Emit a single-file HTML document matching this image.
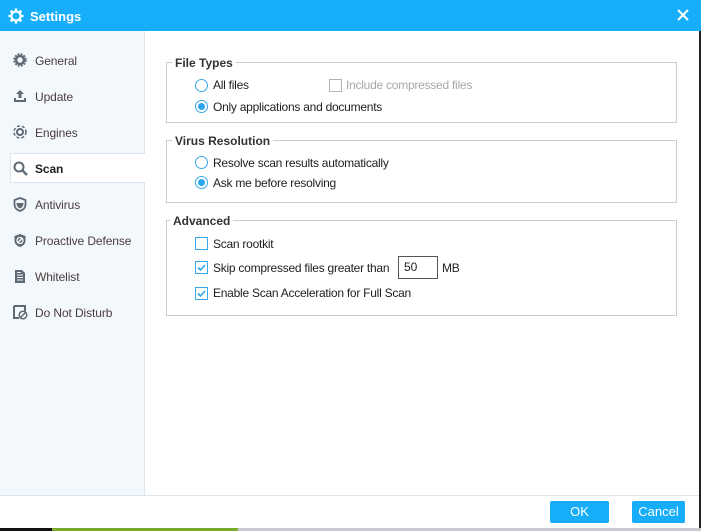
<!DOCTYPE html>
<html><head><style>
*{margin:0;padding:0;box-sizing:border-box}
body{width:701px;height:531px;position:relative;overflow:hidden;background:#fff;font-family:"Liberation Sans",sans-serif;font-size:12px;color:#1e1e1e}
.abs{position:absolute}
#title{left:0;top:0;width:701px;height:31px;background:#16aefa;color:#fff;font-weight:bold;font-size:13px}
#side{left:0;top:31px;width:145px;height:464px;background:#f3f8fc;border-right:1px solid #dde6ee}
.it{position:absolute;left:0;width:145px;height:30px;color:#4a3c3c;font-size:12px;letter-spacing:-0.1px}
.it span{position:absolute;left:35px;top:8px}
.it svg{position:absolute;left:13px;top:7px}
.sel{background:#fff;border:1px solid #dde6ee;border-right:none;left:10px;width:135px}
.sel span{left:24px;font-weight:bold;color:#222}
.sel svg{left:2px}
.grp{position:absolute;left:166px;width:511px;border:1px solid #cfcdbf}
.gt{position:absolute;left:172px;background:#fff;padding:0 3px;font-weight:bold;color:#333}
.rad{position:absolute;width:13px;height:13px;border:1px solid #3aa8e8;border-radius:50%;background:#fff}
.rad.on::after{content:"";position:absolute;left:2px;top:2px;width:7px;height:7px;border-radius:50%;background:#2aa6ee}
.cb{position:absolute;width:13px;height:13px;border:1px solid #3aa8e8;background:#fff}
.lbl{position:absolute;letter-spacing:-0.25px}
.btn{position:absolute;top:501px;height:22px;background:#16aefa;color:#fff;text-align:center;line-height:22px;border-radius:2px;font-size:13px}
</style></head><body>
<div id="title" class="abs">
<svg class="abs" style="left:8px;top:8px" width="16" height="16" viewBox="0 0 16 16"><g fill="none" stroke="#fff" stroke-width="2"><circle cx="8" cy="8" r="4.5"/></g><g stroke="#fff" stroke-width="2.6"><line x1="8" y1="0.5" x2="8" y2="3"/><line x1="8" y1="13" x2="8" y2="15.5"/><line x1="0.5" y1="8" x2="3" y2="8"/><line x1="13" y1="8" x2="15.5" y2="8"/><line x1="2.7" y1="2.7" x2="4.5" y2="4.5"/><line x1="11.5" y1="11.5" x2="13.3" y2="13.3"/><line x1="13.3" y1="2.7" x2="11.5" y2="4.5"/><line x1="2.7" y1="13.3" x2="4.5" y2="11.5"/></g></svg>
<span class="abs" style="left:30px;top:9px">Settings</span>
<svg class="abs" style="left:677px;top:9px" width="12" height="12"><path d="M1 1L11 11M11 1L1 11" stroke="#fff" stroke-width="2"/></svg>
</div>
<div class="abs" style="left:699px;top:31px;width:2px;height:497px;background:#222"></div>
<div id="side" class="abs"></div>
<div class="it" style="top:46px"><svg width="14" height="14" viewBox="0 0 14 14"><circle cx="7" cy="7" r="4" fill="none" stroke="#5f6a75" stroke-width="2.5"/><circle cx="7" cy="7" r="6" fill="none" stroke="#5f6a75" stroke-width="1.5" stroke-dasharray="2 1.2"/></svg><span>General</span></div>
<div class="it" style="top:82px"><svg width="14" height="14" viewBox="0 0 14 14"><path d="M7 1L3 5h2.5v4h3V5H11z M1 9v4h12V9h-2v2H3V9z" fill="#5f6a75"/></svg><span>Update</span></div>
<div class="it" style="top:118px"><svg width="14" height="14" viewBox="0 0 14 14"><circle cx="7" cy="7" r="3" fill="none" stroke="#5f6a75" stroke-width="2"/><circle cx="7" cy="7" r="6" fill="none" stroke="#5f6a75" stroke-width="1.5" stroke-dasharray="3 2"/></svg><span>Engines</span></div>
<div class="it sel" style="top:153px;height:30px"><svg width="15" height="15" viewBox="0 0 15 15"><circle cx="6" cy="6" r="4.5" fill="none" stroke="#5f6a75" stroke-width="2"/><path d="M9.5 9.5L14 14" stroke="#5f6a75" stroke-width="2.5"/></svg><span>Scan</span></div>
<div class="it" style="top:190px"><svg width="14" height="15" viewBox="0 0 14 15"><path d="M7 1L1.5 3v4.5C1.5 11 4 13 7 14c3-1 5.5-3 5.5-6.5V3z" fill="none" stroke="#5f6a75" stroke-width="1.8"/><path d="M3.5 6h7c0 3-1.5 4.5-3.5 5.5C5 10.5 3.5 9 3.5 6z" fill="#5f6a75"/></svg><span>Antivirus</span></div>
<div class="it" style="top:226px"><svg width="14" height="15" viewBox="0 0 14 15"><path d="M7 1L1.5 3v4.5C1.5 11 4 13 7 14c3-1 5.5-3 5.5-6.5V3z" fill="#5f6a75"/><circle cx="7" cy="7.5" r="3" fill="none" stroke="#f3f8fc" stroke-width="1.3"/><path d="M5 9.5L9 5.5" stroke="#f3f8fc" stroke-width="1.3"/></svg><span>Proactive Defense</span></div>
<div class="it" style="top:262px"><svg width="14" height="15" viewBox="0 0 14 15"><path d="M2 1h7l3 3v10H2z" fill="#5f6a75"/><path d="M4 6h6M4 8.5h6M4 11h6M4 3.5h4" stroke="#f3f8fc" stroke-width="1"/></svg><span>Whitelist</span></div>
<div class="it" style="top:298px"><svg width="15" height="15" viewBox="0 0 15 15"><path d="M1 1h11v5M1 1v12h5" fill="none" stroke="#5f6a75" stroke-width="2"/><circle cx="10" cy="10" r="3.8" fill="none" stroke="#5f6a75" stroke-width="1.5"/><path d="M7.5 12.5L12.5 7.5" stroke="#5f6a75" stroke-width="1.5"/></svg><span>Do Not Disturb</span></div>

<div class="grp" style="top:62px;height:61px"></div>
<div class="gt" style="top:56px">File Types</div>
<div class="rad" style="left:195px;top:79px"></div><div class="lbl" style="left:213px;top:78px">All files</div>
<div class="cb" style="left:329px;top:79px;border-color:#b4b4b4"></div><div class="lbl" style="left:346px;top:78px;color:#a8a8a8">Include compressed files</div>
<div class="rad on" style="left:195px;top:100px"></div><div class="lbl" style="left:213px;top:100px">Only applications and documents</div>

<div class="grp" style="top:140px;height:63px"></div>
<div class="gt" style="top:134px">Virus Resolution</div>
<div class="rad" style="left:195px;top:156px"></div><div class="lbl" style="left:213px;top:156px">Resolve scan results automatically</div>
<div class="rad on" style="left:195px;top:176px"></div><div class="lbl" style="left:213px;top:176px">Ask me before resolving</div>

<div class="grp" style="top:220px;height:96px"></div>
<div class="gt" style="top:214px;left:170px">Advanced</div>
<div class="cb" style="left:195px;top:237px"></div><div class="lbl" style="left:213px;top:237px">Scan rootkit</div>
<div class="cb" style="left:195px;top:261px"><svg width="11" height="11" style="position:absolute;left:0;top:0"><path d="M2 5.5l2.5 2.5L9 3" fill="none" stroke="#2aa6ee" stroke-width="1.6"/></svg></div><div class="lbl" style="left:213px;top:261px">Skip compressed files greater than</div>
<div class="abs" style="left:398px;top:256px;width:40px;height:23px;border:1px solid #555;padding:3px 0 0 5px">50</div>
<div class="lbl" style="left:442px;top:261px">MB</div>
<div class="cb" style="left:195px;top:287px"><svg width="11" height="11" style="position:absolute;left:0;top:0"><path d="M2 5.5l2.5 2.5L9 3" fill="none" stroke="#2aa6ee" stroke-width="1.6"/></svg></div><div class="lbl" style="left:213px;top:286px">Enable Scan Acceleration for Full Scan</div>

<div class="abs" style="left:0;top:495px;width:699px;height:1px;background:#dde6ee"></div>
<div class="btn" style="left:550px;width:59px">OK</div>
<div class="btn" style="left:632px;width:53px">Cancel</div>
<div class="abs" style="left:0;top:528px;width:52px;height:3px;background:#111"></div>
<div class="abs" style="left:52px;top:528px;width:186px;height:3px;background:#7aaa2a"></div>
<div class="abs" style="left:238px;top:528px;width:463px;height:3px;background:#c8ccd0"></div>
</body></html>
